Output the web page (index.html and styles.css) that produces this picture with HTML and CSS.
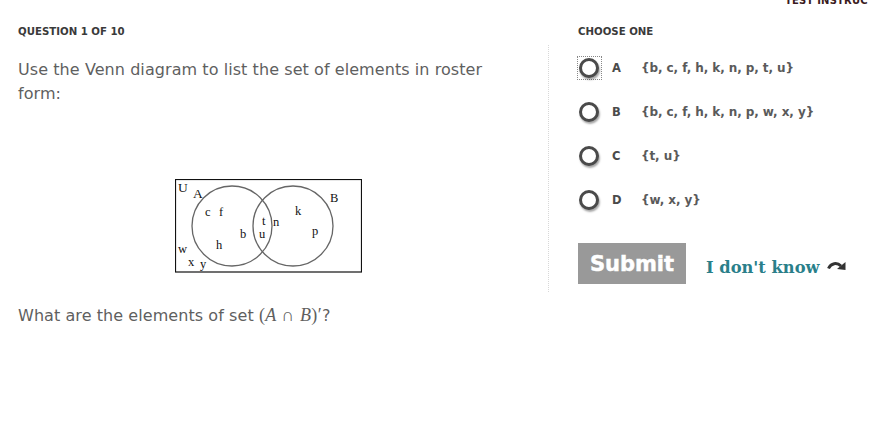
FILE: index.html
```html
<!DOCTYPE html>
<html lang="en">
<head>
    <meta charset="UTF-8">
    <title>Question 1 of 10</title>
    <link rel="stylesheet" href="styles.css">
</head>
<body>
    <div class="topbar"><span class="test-link">TEST INSTRUC</span></div>
    <div class="container">
        <div class="left-section">
            <h2 class="small-head">QUESTION 1 OF 10</h2>
            <p class="question first">Use the Venn diagram to list the set of elements in roster form:</p>
            <svg class="venn" width="187" height="94" viewBox="0 0 187 94">
                <rect x="0.5" y="0.5" width="186" height="92.5" fill="#fff" stroke="#111" stroke-width="1.2"/>
                <circle cx="57" cy="47" r="40" fill="none" stroke="#666" stroke-width="1.3"/>
                <circle cx="118" cy="47" r="40" fill="none" stroke="#666" stroke-width="1.3"/>
                <g class="venn-text">
                    <text x="3" y="13" class="big">U</text>
                    <text x="18" y="19" class="big">A</text>
                    <text x="155" y="23">B</text>
                    <text x="30" y="37">c</text>
                    <text x="44" y="37">f</text>
                    <text x="87" y="46">t</text>
                    <text x="98" y="47">n</text>
                    <text x="120" y="36">k</text>
                    <text x="137" y="56">p</text>
                    <text x="65" y="59">b</text>
                    <text x="84" y="59">u</text>
                    <text x="41" y="70">h</text>
                    <text x="3" y="74">w</text>
                    <text x="13" y="87">x</text>
                    <text x="25" y="89">y</text>
                </g>
            </svg>
            <p class="question">What are the elements of set <span class="math">(<i>A</i> ∩ <i>B</i>)′</span>?</p>
        </div>
        <div class="divider"></div>
        <div class="right-section">
            <h2 class="small-head">CHOOSE ONE</h2>
            <div class="choices">
                <div class="choice">
                    <span class="radio-box focused"><span class="radio"></span></span>
                    <span class="letter">A</span>
                    <span class="answer">{b, c, f, h, k, n, p, t, u}</span>
                </div>
                <div class="choice">
                    <span class="radio-box"><span class="radio"></span></span>
                    <span class="letter">B</span>
                    <span class="answer">{b, c, f, h, k, n, p, w, x, y}</span>
                </div>
                <div class="choice">
                    <span class="radio-box"><span class="radio"></span></span>
                    <span class="letter">C</span>
                    <span class="answer">{t, u}</span>
                </div>
                <div class="choice">
                    <span class="radio-box"><span class="radio"></span></span>
                    <span class="letter">D</span>
                    <span class="answer">{w, x, y}</span>
                </div>
            </div>
            <div class="actions">
                <button type="button" class="submit">Submit</button>
                <a class="dont-know">I don't know</a>
                <svg class="skip-icon" width="19" height="12" viewBox="0 0 19 12">
                    <path d="M1.5 8.5 C4 3 10 2 14 6" fill="none" stroke="#333" stroke-width="3"/>
                    <path d="M18.5 2 L18.5 10 L10 9 Z" fill="#333"/>
                </svg>
            </div>
        </div>
    </div>
</body>
</html>
```
FILE: styles.css
```css
html, body {
    margin: 0;
    padding: 0;
    overflow: hidden;
}
body {
    font-family: "DejaVu Sans", Verdana, sans-serif;
    background-color: white;
    color: #555;
    height: 430px;
}
.topbar {
    height: 7px;
    padding-left: 785px;
    overflow: hidden;
    white-space: nowrap;
    display: flex;
    align-items: flex-end;
}
.test-link {
    font-size: 10px;
    font-weight: bold;
    letter-spacing: 0.2px;
    color: #3a1a20;
    line-height: 12px;
}
.container {
    display: flex;
}
.left-section {
    width: 530px;
    padding: 18px 0 0 18px;
}
.divider {
    width: 0;
    height: 247px;
    margin-top: 38px;
    border-right: 1px dotted #d8d8d8;
}
.right-section {
    padding: 18px 0 0 29px;
    flex: 1;
}
.small-head {
    margin: 0;
    font-size: 10.2px;
    line-height: 13px;
    font-weight: bold;
    color: #3a3a3a;
}
.question {
    margin: 0;
    font-size: 16px;
    line-height: 24px;
    letter-spacing: 0.07px;
    width: 480px;
    color: #5f5f5f;
}
.question.first {
    margin-top: 20px;
}
.venn {
    display: block;
    margin: 73px 0 30px 157px;
}
.venn-text text {
    font-family: "Liberation Serif", serif;
    font-size: 12.5px;
    fill: #111;
}
.venn-text .big {
    font-size: 13.5px;
}
.math {
    font-family: "Liberation Serif", serif;
    font-size: 18px;
    letter-spacing: 0.4px;
}
.choices {
    margin-top: 8px;
}
.choice {
    display: flex;
    align-items: center;
    height: 44px;
}
.radio-box {
    width: 25px;
    height: 24px;
    margin-left: -1px;
    box-sizing: border-box;
    display: flex;
    align-items: center;
    justify-content: center;
    border: 1px dotted transparent;
}
.radio-box.focused {
    border-color: #888;
}
.radio {
    width: 14px;
    height: 14px;
    margin-right: 1px;
    border: 3px solid #4a4a4a;
    border-radius: 50%;
    background-color: white;
    box-shadow: 1px 2px 2px rgba(0, 0, 0, 0.35);
}
.letter {
    width: 29px;
    margin-left: 10px;
    font-size: 11.5px;
    font-weight: bold;
    color: #4a4a4a;
}
.answer {
    font-size: 12px;
    font-weight: bold;
    letter-spacing: -0.08px;
    color: #5a5a5a;
}
.actions {
    display: flex;
    align-items: center;
    margin-top: 21px;
}
.submit {
    width: 108px;
    height: 41px;
    padding: 0;
    background-color: #999;
    color: white;
    border: none;
    font-family: "DejaVu Sans", Verdana, sans-serif;
    font-size: 21px;
    font-weight: bold;
    -webkit-text-stroke: 0.5px white;
}
.dont-know {
    margin: 7px 0 0 20px;
    font-family: "DejaVu Serif", Georgia, serif;
    font-size: 16.3px;
    font-weight: bold;
    color: #2a7f8a;
}
.skip-icon {
    margin: 4px 0 0 7px;
}
```
